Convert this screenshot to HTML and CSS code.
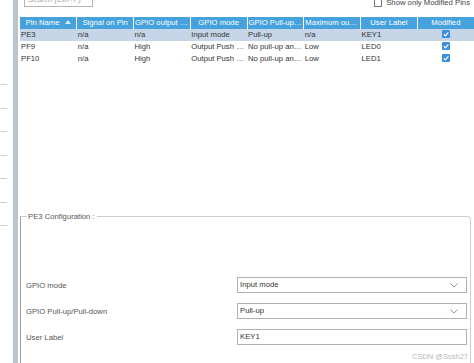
FILE: index.html
```html
<!DOCTYPE html>
<html lang="en">
<head>
  <meta charset="UTF-8" />
  <title>Pinout Configuration</title>
  <link rel="stylesheet" href="styles.css">
</head>
<body>

  <div class="rail">
    <div class="tick"></div>
    <div class="tick"></div>
    <div class="tick"></div>
    <div class="tick"></div>
    <div class="tick"></div>
    <div class="tick"></div>
    <div class="tick"></div>
  </div>
  <div class="divider"></div>

  <div class="main">
    <div class="topbar">
      <div class="search">Search (Ctrl+F)</div>
      <label class="only-modified"><span class="box"></span>Show only Modified Pins</label>
    </div>

    <table class="pins">
      <thead>
        <tr>
          <th class="sorted">Pin Name <svg width="6" height="5" viewBox="0 0 6 5"><path d="M0 5 L3 1 L6 5 Z" fill="#d6ecf8"/></svg></th>
          <th>Signal on Pin</th>
          <th>GPIO output level</th>
          <th>GPIO mode</th>
          <th>GPIO Pull-up/Pull-down</th>
          <th>Maximum output speed</th>
          <th>User Label</th>
          <th>Modified</th>
        </tr>
      </thead>
      <tbody>
        <tr class="selected">
          <td>PE3</td><td>n/a</td><td>n/a</td><td>Input mode</td><td>Pull-up</td><td>n/a</td><td>KEY1</td>
          <td class="check"><svg width="8" height="8" viewBox="0 0 8 8"><rect width="8" height="8" rx="1" fill="#3a8fe0"/><path d="M1.8 4.2 L3.4 5.8 L6.3 2.3" stroke="#fff" stroke-width="1.2" fill="none"/></svg></td>
        </tr>
        <tr>
          <td>PF9</td><td>n/a</td><td>High</td><td>Output Push Pull</td><td>No pull-up and no pull-down</td><td>Low</td><td>LED0</td>
          <td class="check"><svg width="8" height="8" viewBox="0 0 8 8"><rect width="8" height="8" rx="1" fill="#3a8fe0"/><path d="M1.8 4.2 L3.4 5.8 L6.3 2.3" stroke="#fff" stroke-width="1.2" fill="none"/></svg></td>
        </tr>
        <tr>
          <td>PF10</td><td>n/a</td><td>High</td><td>Output Push Pull</td><td>No pull-up and no pull-down</td><td>Low</td><td>LED1</td>
          <td class="check"><svg width="8" height="8" viewBox="0 0 8 8"><rect width="8" height="8" rx="1" fill="#3a8fe0"/><path d="M1.8 4.2 L3.4 5.8 L6.3 2.3" stroke="#fff" stroke-width="1.2" fill="none"/></svg></td>
        </tr>
      </tbody>
    </table>

    <fieldset class="config">
      <legend>PE3 Configuration :</legend>
      <div class="field">
        <span class="label">GPIO mode</span>
        <div class="select">Input mode <svg width="8" height="5" viewBox="0 0 8 5"><path d="M0.5 0.5 L4 4 L7.5 0.5" stroke="#999" fill="none"/></svg></div>
      </div>
      <div class="field">
        <span class="label">GPIO Pull-up/Pull-down</span>
        <div class="select">Pull-up <svg width="8" height="5" viewBox="0 0 8 5"><path d="M0.5 0.5 L4 4 L7.5 0.5" stroke="#999" fill="none"/></svg></div>
      </div>
      <div class="field">
        <span class="label">User Label</span>
        <div class="input">KEY1</div>
      </div>
      <div class="watermark">CSDN @Sssh27</div>
    </fieldset>
  </div>

</body>
</html>
```

FILE: styles.css
```css
body {
  margin: 0;
  font-family: "Liberation Sans", Arial, sans-serif;
  font-size: 7.7px;
  color: #333;
  background: #fff;
  display: flex;
  height: 363px;
  overflow: hidden;
}

.rail {
  width: 13px;
  display: flex;
  flex-direction: column;
  gap: 22.5px;
  padding-top: 84px;
}

.tick {
  width: 7px;
  height: 1px;
  background: #d0d0d0;
}

.divider {
  width: 5px;
  background: #b9c4cc;
}

.main {
  flex: 1;
  padding-left: 2px;
  display: flex;
  flex-direction: column;
  min-width: 0;
}

.main > * {
  flex-shrink: 0;
}

.topbar {
  height: 17px;
  display: flex;
  justify-content: space-between;
  align-items: flex-start;
}

.search {
  margin: -8px 0 0 4px;
  width: 64px;
  height: 13px;
  border: 1px solid #b5b5b5;
  padding-left: 3px;
  line-height: 13px;
  font-style: italic;
  color: #a0a0a0;
}

.only-modified {
  margin: -2px 4px 0 0;
  display: flex;
  align-items: center;
  gap: 4px;
  color: #444;
}

.box {
  width: 6px;
  height: 6px;
  border: 1px solid #777;
  background: #fff;
}

.pins {
  width: 454px;
  table-layout: fixed;
  border-collapse: collapse;
}

.pins th,
.pins td {
  height: 12px;
  padding: 0 1px;
  white-space: nowrap;
  overflow: hidden;
  text-overflow: ellipsis;
  line-height: 12px;
}

.pins th {
  background: #45a2dc;
  color: #fff;
  font-weight: normal;
  text-align: center;
  border-left: 1px solid #fff;
}

.pins th:first-child {
  border-left: none;
}

.pins th.sorted svg {
  margin-left: 3px;
  vertical-align: 1px;
}

.pins td {
  text-align: left;
}

.pins tr.selected td {
  background: #c6d5e8;
}

.pins td.check {
  text-align: center;
}

.pins td.check svg {
  vertical-align: -1px;
}

.config {
  margin: 147px 3px 0 0;
  padding: 56px 3px 0 5px;
  height: 160px;
  border: 1px solid #cdcdcd;
  border-left-color: #9e9e9e;
  border-radius: 0 4px 0 0;
  display: flex;
  flex-direction: column;
  gap: 10px;
  position: relative;
}

.config legend {
  padding: 0 2px 0 1px;
  margin-left: 1px;
  color: #555;
}

.field {
  display: flex;
  align-items: center;
  height: 16px;
}

.label {
  width: 211px;
  color: #555;
}

.select,
.input {
  flex: 1;
  height: 14px;
  border: 1px solid #b0b0b0;
  padding: 0 8px 0 2px;
  line-height: 14px;
  display: flex;
  justify-content: space-between;
  align-items: center;
  color: #333;
}

.watermark {
  position: absolute;
  right: 2px;
  top: 131px;
  color: #b8b8b8;
  font-size: 7.5px;
}
```
